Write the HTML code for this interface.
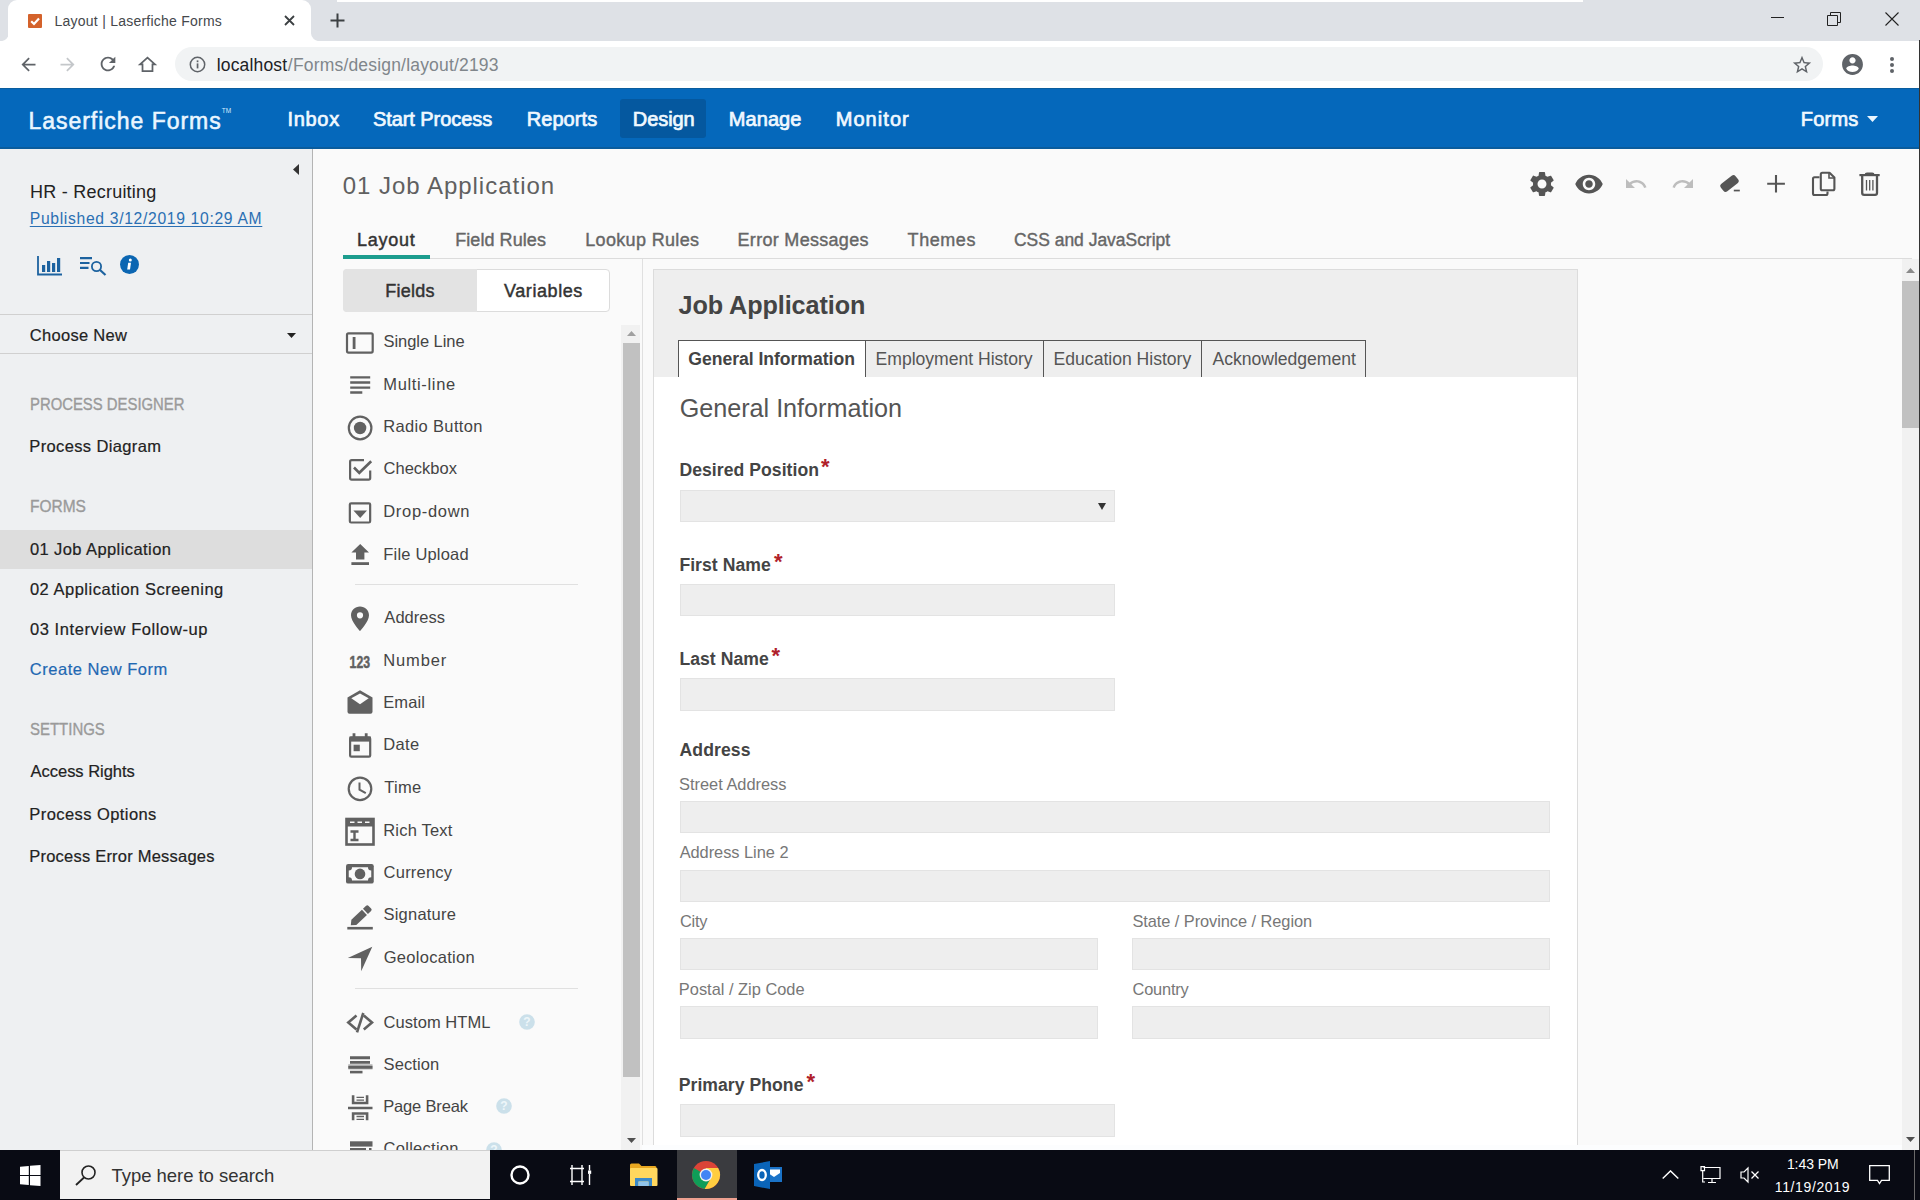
<!DOCTYPE html>
<html lang="en"><head><meta charset="utf-8"><title>Layout | Laserfiche Forms</title>
<style>
html,body{margin:0;padding:0;}
body{width:1920px;height:1200px;position:relative;overflow:hidden;background:#fafafa;font-family:"Liberation Sans",sans-serif;}
.b{position:absolute;display:block;box-sizing:border-box;}
.t{position:absolute;white-space:nowrap;line-height:1;display:block;}
</style></head><body>
<div class="b" style="left:0px;top:0px;width:1920px;height:41px;background:#dee1e6;"></div>
<div class="b" style="left:337px;top:0px;width:1246px;height:2px;background:#ffffff;"></div>
<div class="b" style="left:8px;top:0px;width:303px;height:41px;background:#ffffff;border-radius:9px 9px 0 0;"></div>
<div class="b" style="left:1771px;top:17px;width:13px;height:1px;background:#222;"></div>
<div class="b" style="left:0px;top:41px;width:1920px;height:47px;background:#ffffff;"></div>
<div class="b" style="left:175px;top:47px;width:1648px;height:34px;background:#f1f3f4;border-radius:17px;"></div>
<div class="b" style="left:1890px;top:57px;width:4px;height:4px;background:#5f6368;border-radius:2px;"></div>
<div class="b" style="left:1890px;top:63px;width:4px;height:4px;background:#5f6368;border-radius:2px;"></div>
<div class="b" style="left:1890px;top:69px;width:4px;height:4px;background:#5f6368;border-radius:2px;"></div>
<div class="b" style="left:0px;top:88px;width:1920px;height:61px;background:#0568bb;"></div>
<div class="b" style="left:0px;top:88px;width:1920px;height:1px;background:#0a5d9e;"></div>
<div class="b" style="left:0px;top:147px;width:1920px;height:2px;background:#0a5c9d;"></div>
<div class="b" style="left:620px;top:99px;width:86px;height:39px;background:#05589f;border-radius:3px;"></div>
<div class="b" style="left:0px;top:149px;width:312px;height:1001px;background:#eef0f2;"></div>
<div class="b" style="left:312px;top:149px;width:1px;height:1001px;background:#b4b4b4;"></div>
<div class="b" style="left:0px;top:314px;width:312px;height:1px;background:#d0d0d0;"></div>
<div class="b" style="left:0px;top:353px;width:312px;height:1px;background:#d0d0d0;"></div>
<div class="b" style="left:0px;top:530px;width:312px;height:39px;background:#dddddd;"></div>
<div class="b" style="left:343px;top:258px;width:1569px;height:1px;background:#dcdcdc;"></div>
<div class="b" style="left:343px;top:255px;width:87px;height:4px;background:#1c9d8e;"></div>
<div class="b" style="left:1902px;top:259px;width:17px;height:891px;background:#f1f1f1;"></div>
<div class="b" style="left:1902px;top:281px;width:17px;height:147px;background:#c1c1c1;"></div>
<div class="b" style="left:1919px;top:40px;width:1px;height:1110px;background:#333;"></div>
<div class="b" style="left:343px;top:269px;width:267px;height:43px;background:#ffffff;border:1px solid #dcdcdc;border-radius:4px;"></div>
<div class="b" style="left:343px;top:269px;width:134px;height:43px;background:#e3e3e3;border-radius:4px 0 0 4px;"></div>
<div class="b" style="left:621px;top:325px;width:19px;height:825px;background:#f1f1f1;"></div>
<div class="b" style="left:623px;top:343px;width:17px;height:734px;background:#c1c1c1;"></div>
<div class="b" style="left:642px;top:259px;width:1px;height:891px;background:#e0e0e0;"></div>
<div class="b" style="left:355px;top:584px;width:223px;height:1px;background:#e0e0e0;"></div>
<div class="b" style="left:355px;top:988px;width:223px;height:1px;background:#e0e0e0;"></div>
<div class="b" style="left:653px;top:269px;width:925px;height:881px;background:#ffffff;border:1px solid #dcdcdc;border-bottom:none;"></div>
<div class="b" style="left:654px;top:270px;width:923px;height:107px;background:#eeeeee;"></div>
<div class="b" style="left:678px;top:340px;width:688px;height:37px;border:1px solid #555;border-bottom:none;"></div>
<div class="b" style="left:678px;top:340px;width:188px;height:37px;background:#ffffff;border:1px solid #555;border-bottom:none;"></div>
<div class="b" style="left:1043px;top:340px;width:1px;height:37px;background:#555;"></div>
<div class="b" style="left:1201px;top:340px;width:1px;height:37px;background:#555;"></div>
<div class="b" style="left:680px;top:490px;width:435px;height:32px;background:#eeeeee;border:1px solid #e3e3e3;"></div>
<div class="b" style="left:680px;top:584px;width:435px;height:32px;background:#eeeeee;border:1px solid #e3e3e3;"></div>
<div class="b" style="left:680px;top:678px;width:435px;height:33px;background:#eeeeee;border:1px solid #e3e3e3;"></div>
<div class="b" style="left:680px;top:801px;width:870px;height:32px;background:#eeeeee;border:1px solid #e3e3e3;"></div>
<div class="b" style="left:680px;top:870px;width:870px;height:32px;background:#eeeeee;border:1px solid #e3e3e3;"></div>
<div class="b" style="left:680px;top:938px;width:418px;height:32px;background:#eeeeee;border:1px solid #e3e3e3;"></div>
<div class="b" style="left:1132px;top:938px;width:418px;height:32px;background:#eeeeee;border:1px solid #e3e3e3;"></div>
<div class="b" style="left:680px;top:1006px;width:418px;height:33px;background:#eeeeee;border:1px solid #e3e3e3;"></div>
<div class="b" style="left:1132px;top:1006px;width:418px;height:33px;background:#eeeeee;border:1px solid #e3e3e3;"></div>
<div class="b" style="left:680px;top:1104px;width:435px;height:33px;background:#eeeeee;border:1px solid #e3e3e3;"></div>
<div class="b" style="left:642px;top:1145px;width:1260px;height:5px;background:#fcfdfe;"></div>
<div class="b" style="left:0px;top:1150px;width:1920px;height:50px;background:#090b14;z-index:5;"></div>
<div class="b" style="left:60px;top:1150px;width:430px;height:49px;background:#f2f2f2;border-top:1px solid #cfcfcf;z-index:5;"></div>
<div class="b" style="left:677px;top:1150px;width:60px;height:50px;background:#3a3b3f;z-index:5;"></div>
<div class="b" style="left:677px;top:1198px;width:60px;height:2px;background:#eda090;z-index:5;"></div>
<div class="b" style="left:1914px;top:1150px;width:1px;height:50px;background:#6a6a6a;z-index:5;"></div>
<svg class="b" style="left:0px;top:33px;" width="9" height="8" viewBox="0 0 9 8"><path d="M0 8 H9 V0 A8 8 0 0 1 0 8 Z" fill="#fff"/></svg>
<svg class="b" style="left:311px;top:33px;" width="9" height="8" viewBox="0 0 9 8"><path d="M9 8 H0 V0 A8 8 0 0 0 9 8 Z" fill="#fff"/></svg>
<svg class="b" style="left:28px;top:14px;" width="14" height="14" viewBox="0 0 14 14"><rect x="0" y="0" width="14" height="14" rx="1" fill="#d4622b"/><path d="M3.2 7.2 L6 10 L11 4.6" stroke="#fff" stroke-width="2.2" fill="none"/></svg>
<svg class="b" style="left:284px;top:15px;" width="11" height="11" viewBox="0 0 11 11"><path d="M1 1 L10 10 M10 1 L1 10" stroke="#3c4043" stroke-width="1.8" fill="none"/></svg>
<svg class="b" style="left:330px;top:13px;" width="15" height="15" viewBox="0 0 15 15"><path d="M7.5 0.5 V14.5 M0.5 7.5 H14.5" stroke="#3c4043" stroke-width="2" fill="none"/></svg>
<svg class="b" style="left:1827px;top:12px;" width="14" height="14" viewBox="0 0 14 14"><path d="M0.5 3.5 H10.5 V13.5 H0.5 Z M3.5 3.5 V0.5 H13.5 V10.5 H10.5" stroke="#222" stroke-width="1" fill="none"/></svg>
<svg class="b" style="left:1885px;top:12px;" width="14" height="14" viewBox="0 0 14 14"><path d="M0.5 0.5 L13.5 13.5 M13.5 0.5 L0.5 13.5" stroke="#222" stroke-width="1.1" fill="none"/></svg>
<svg class="b" style="left:18px;top:54px;" width="21" height="21" viewBox="0 0 24 24"><path d="M20 11H7.83l5.59-5.59L12 4l-8 8 8 8 1.41-1.41L7.83 13H20v-2z" fill="#5f6368"/></svg>
<svg class="b" style="left:57px;top:54px;" width="21" height="21" viewBox="0 0 24 24"><path d="M12 4l-1.41 1.41L16.17 11H4v2h12.17l-5.58 5.59L12 20l8-8z" fill="#c4c7ca"/></svg>
<svg class="b" style="left:97px;top:53px;" width="22" height="22" viewBox="0 0 24 24"><path d="M17.65 6.35C16.2 4.9 14.21 4 12 4c-4.42 0-7.99 3.58-7.99 8s3.57 8 7.99 8c3.73 0 6.84-2.55 7.73-6h-2.08c-.82 2.33-3.04 4-5.65 4-3.31 0-6-2.69-6-6s2.69-6 6-6c1.66 0 3.14.69 4.22 1.78L13 11h7V4l-2.35 2.35z" fill="#5f6368"/></svg>
<svg class="b" style="left:137px;top:54px;" width="21" height="21" viewBox="0 0 24 24"><path d="M12 4.2 L3.5 11.8 H6.3 V19.5 H17.7 V11.8 H20.500 Z" stroke="#5f6368" stroke-width="2" fill="none" stroke-linejoin="miter"/></svg>
<svg class="b" style="left:189px;top:56px;" width="17" height="17" viewBox="0 0 17 17"><circle cx="8.5" cy="8.5" r="7.2" stroke="#5f6368" stroke-width="1.5" fill="none"/><rect x="7.7" y="7.4" width="1.7" height="5" fill="#5f6368"/><rect x="7.7" y="4.4" width="1.7" height="1.8" fill="#5f6368"/></svg>
<svg class="b" style="left:1791px;top:54px;" width="22" height="22" viewBox="0 0 24 24"><path d="M22 9.24l-7.19-.62L12 2 9.19 8.63 2 9.24l5.46 4.73L5.82 21 12 17.27 18.18 21l-1.63-7.03L22 9.24zM12 15.4l-3.76 2.27 1-4.28-3.32-2.88 4.38-.38L12 6.1l1.71 4.04 4.38.38-3.32 2.88 1 4.28L12 15.4z" fill="#5f6368"/></svg>
<svg class="b" style="left:1840px;top:52px;" width="25" height="25" viewBox="0 0 24 24"><path d="M12 2C6.48 2 2 6.48 2 12s4.48 10 10 10 10-4.48 10-10S17.52 2 12 2zm0 3c1.66 0 3 1.34 3 3s-1.34 3-3 3-3-1.34-3-3 1.34-3 3-3zm0 14.2c-2.5 0-4.71-1.28-6-3.22.03-1.99 4-3.08 6-3.08 1.99 0 5.970 1.090 6 3.080-1.290 1.940-3.500 3.220-6 3.220z" fill="#5f6368"/></svg>
<svg class="b" style="left:1867px;top:116px;" width="11" height="6" viewBox="0 0 11 6"><path d="M0 0 H11 L5.5 6 Z" fill="#eaf6ff"/></svg>
<svg class="b" style="left:293px;top:164px;" width="6" height="11" viewBox="0 0 6 11"><path d="M6 0 V11 L0 5.5 Z" fill="#333"/></svg>
<svg class="b" style="left:37px;top:256px;" width="26" height="20" viewBox="0 0 26 20"><path d="M1 0 V18.5 H25" stroke="#1c629f" stroke-width="1.8" fill="none"/><rect x="5" y="9" width="3.2" height="7" fill="#1c629f"/><rect x="10" y="5" width="3.2" height="11" fill="#1c629f"/><rect x="15" y="7" width="3.2" height="9" fill="#1c629f"/><rect x="20" y="2" width="3.2" height="14" fill="#1c629f"/></svg>
<svg class="b" style="left:80px;top:257px;" width="27" height="19" viewBox="0 0 27 19"><path d="M0 1.200 H12 M0 6 H9.500 M0 10.800 H8.500" stroke="#1c629f" stroke-width="2.200" fill="none"/><circle cx="16.500" cy="9.500" r="4.600" stroke="#1c629f" stroke-width="1.800" fill="none"/><path d="M20 13 L25.500 18" stroke="#1c629f" stroke-width="2.200"/></svg>
<svg class="b" style="left:120px;top:255px;" width="19" height="19" viewBox="0 0 19 19"><circle cx="9.500" cy="9.500" r="9.500" fill="#0b66b2"/><path d="M8.200 7.800 H11 L10 14.600 H7.200 Z" fill="#fff"/><circle cx="10.300" cy="4.900" r="1.500" fill="#fff"/></svg>
<svg class="b" style="left:287px;top:333px;" width="9" height="5" viewBox="0 0 9 5"><path d="M0 0 H9 L4.500 5 Z" fill="#222"/></svg>
<svg class="b" style="left:1527px;top:169px;" width="30" height="30" viewBox="0 0 24 24"><path d="M19.14 12.94c.04-.3.06-.61.06-.94 0-.32-.02-.64-.07-.94l2.03-1.58c.18-.14.23-.41.12-.61l-1.920-3.320c-.12-.22-.37-.29-.59-.22l-2.390.96c-.5-.38-1.030-.7-1.620-.94l-.36-2.540c-.04-.24-.24-.41-.48-.41h-3.840c-.24 0-.43.17-.47.41l-.36 2.540c-.59.24-1.130.57-1.620.94l-2.390-.96c-.22-.08-.47 0-.59.22L2.740 8.870c-.12.21-.08.47.12.61l2.030 1.580c-.05.3-.09.63-.09.94s.02.64.07.94l-2.030 1.580c-.18.14-.23.41-.12.61l1.920 3.320c.12.22.37.29.59.22l2.390-.96c.5.38 1.030.7 1.620.94l.36 2.540c.05.24.24.41.48.41h3.840c.24 0 .44-.17.47-.41l.36-2.540c.59-.24 1.130-.56 1.620-.94l2.390.96c.22.08.47 0 .59-.22l1.920-3.320c.12-.22.07-.47-.12-.61l-2.010-1.580zM12 15.600c-1.980 0-3.600-1.620-3.600-3.600s1.620-3.600 3.600-3.600 3.600 1.620 3.600 3.600-1.620 3.600-3.600 3.600z" fill="#555"/></svg>
<svg class="b" style="left:1574px;top:169px;" width="30" height="30" viewBox="0 0 24 24"><path d="M12 4.500C7 4.500 2.730 7.610 1 12c1.730 4.390 6 7.500 11 7.500s9.270-3.110 11-7.500c-1.730-4.390-6-7.500-11-7.500zM12 17c-2.760 0-5-2.240-5-5s2.240-5 5-5 5 2.240 5 5-2.240 5-5 5zm0-8c-1.660 0-3 1.340-3 3s1.340 3 3 3 3-1.340 3-3-1.340-3-3-3z" fill="#555"/></svg>
<svg class="b" style="left:1624px;top:172px;" width="24" height="24" viewBox="0 0 24 24"><path d="M12.500 8c-2.650 0-5.050.99-6.900 2.600L2 7v9h9l-3.620-3.620c1.390-1.160 3.160-1.880 5.120-1.880 3.540 0 6.550 2.310 7.600 5.500l2.370-.78C21.080 11.030 17.150 8 12.500 8z" fill="#bdbdbd"/></svg>
<svg class="b" style="left:1671px;top:172px;" width="24" height="24" viewBox="0 0 24 24"><path d="M18.400 10.600C16.550 8.990 14.150 8 11.500 8c-4.650 0-8.580 3.030-9.960 7.220L3.900 16c1.050-3.190 4.050-5.500 7.600-5.500 1.950 0 3.730.72 5.120 1.880L13 16h9V7l-3.600 3.600z" fill="#bdbdbd"/></svg>
<svg class="b" style="left:1716px;top:172px" width="28" height="24" viewBox="1716 172 28 24"><rect x="1720.200" y="178.700" width="18.600" height="9.600" rx="2.800" transform="rotate(-38 1729.500 183.500)" fill="#555"/><rect x="1733.800" y="189.700" width="6" height="1.700" fill="#555"/></svg>
<svg class="b" style="left:1765px;top:173px" width="22" height="22" viewBox="1765 173 22 22"><path d="M1776 175.100 V192.500 M1767.200 183.800 H1784.900" stroke="#555" stroke-width="2.100" fill="none"/></svg>
<svg class="b" style="left:1809px;top:169px" width="30" height="30" viewBox="1809 169 30 30"><path d="M1819.500 177.200 H1814.500 Q1813 177.200 1813 178.700 V193.500 Q1813 195 1814.500 195 H1826 Q1827.500 195 1827.500 193.500 V191.500" stroke="#555" stroke-width="2.100" fill="none"/><path d="M1829.500 172.700 H1822.300 Q1820.800 172.700 1820.800 174.200 V188.800 Q1820.800 190.300 1822.300 190.300 H1832.900 Q1834.400 190.300 1834.400 188.800 V177.600 Z" stroke="#555" stroke-width="2.100" fill="none" stroke-linejoin="round"/><path d="M1829 172.700 V178 H1834.400" stroke="#555" stroke-width="1.600" fill="none"/></svg>
<svg class="b" style="left:1857px;top:170px" width="26" height="29" viewBox="1857 170 26 29"><path d="M1859.400 175.100 H1879.700" stroke="#555" stroke-width="2.200"/><path d="M1865.500 174.500 Q1865.500 173.200 1867 173.200 H1872.200 Q1873.700 173.200 1873.700 174.500" stroke="#555" stroke-width="1.600" fill="none"/><path d="M1862.200 176 V193 Q1862.200 194.900 1864.100 194.900 H1875.100 Q1877 194.900 1877 193 V176" stroke="#555" stroke-width="2.300" fill="none"/><path d="M1866.500 180 V190.500 M1869.700 180 V190.500 M1872.900 180 V190.500" stroke="#555" stroke-width="1.300" fill="none"/></svg>
<svg class="b" style="left:1906px;top:268px;" width="9" height="5" viewBox="0 0 9 5"><path d="M0 5 H9 L4.500 0 Z" fill="#8a8a8a"/></svg>
<svg class="b" style="left:1906px;top:1137px;" width="9" height="5" viewBox="0 0 9 5"><path d="M0 0 H9 L4.500 5 Z" fill="#505050"/></svg>
<svg class="b" style="left:627px;top:331px;" width="9" height="5" viewBox="0 0 9 5"><path d="M0 5 H9 L4.500 0 Z" fill="#a0a0a0"/></svg>
<svg class="b" style="left:627px;top:1138px;" width="9" height="5" viewBox="0 0 9 5"><path d="M0 0 H9 L4.500 5 Z" fill="#505050"/></svg>
<svg class="b" style="left:344px;top:330px" width="32" height="26" viewBox="344 330 32 26"><rect x="347" y="333.300" width="25.700" height="19.300" rx="1.500" stroke="#616161" stroke-width="2.200" fill="none"/><rect x="352.700" y="337" width="2.800" height="12" fill="#616161"/></svg>
<svg class="b" style="left:348px;top:374px" width="25" height="22" viewBox="348 374 25 22"><path d="M350.200 377.400 H370.200 M350.200 382.500 H370.200 M350.200 387.600 H370.200 M350.200 392.500 H362.300" stroke="#616161" stroke-width="2.300" fill="none"/></svg>
<svg class="b" style="left:345px;top:413px" width="30" height="30" viewBox="345 413 30 30"><circle cx="360.100" cy="428" r="11.300" stroke="#616161" stroke-width="2.200" fill="none"/><circle cx="360.100" cy="428" r="6.200" fill="#616161"/></svg>
<svg class="b" style="left:346px;top:456px" width="29" height="28" viewBox="346 456 29 28"><path d="M370.200 470.500 V478 Q370.200 479.600 368.600 479.600 H351.700 Q350.100 479.600 350.100 478 V461.700 Q350.100 460.100 351.700 460.100 H364" stroke="#616161" stroke-width="2.200" fill="none"/><path d="M354 467.500 L359.300 472.800 L371.200 461.200" stroke="#616161" stroke-width="2.600" fill="none"/></svg>
<svg class="b" style="left:346px;top:500px" width="28" height="26" viewBox="346 500 28 26"><rect x="349.850" y="503.300" width="20.300" height="19.200" rx="1.300" stroke="#616161" stroke-width="2.200" fill="none"/><path d="M353.400 510.600 H367 L360.200 518.100 Z" fill="#616161"/></svg>
<svg class="b" style="left:349px;top:542px" width="23" height="26" viewBox="349 542 23 26"><path d="M360.200 543.900 L369 552.500 H364.400 V559.500 H356 V552.500 H351.400 Z" fill="#616161"/><rect x="351.400" y="562.200" width="17.600" height="2.800" fill="#616161"/></svg>
<svg class="b" style="left:349px;top:604px" width="23" height="30" viewBox="349 604 23 30"><path d="M360 606.400 C355 606.400 351 610.300 351 615.200 C351 621.500 360 631 360 631 C360 631 369 621.500 369 615.200 C369 610.300 365 606.400 360 606.400 Z M360 618.400 A3.100 3.100 0 1 1 360 612.200 A3.100 3.100 0 0 1 360 618.400 Z" fill="#616161" fill-rule="evenodd"/></svg>
<svg class="b" style="left:348px;top:653px" width="26" height="18" viewBox="348 653 26 18"><text transform="translate(349.600,668) scale(0.940,1.260)" font-family="Liberation Sans, sans-serif" font-weight="700" font-size="13" fill="#616161" stroke="#616161" stroke-width="0.400">123</text></svg>
<svg class="b" style="left:345px;top:688px" width="30" height="28" viewBox="345 688 30 28"><path d="M360 690.300 L372.500 697.600 V711.800 Q372.500 713.750 370.500 713.750 H349.500 Q347.500 713.750 347.500 711.800 V697.600 Z" fill="#616161"/><path d="M351.300 698.300 L360 693.400 L368.700 698.300 L360 704.300 Z" fill="#fafafa"/></svg>
<svg class="b" style="left:346px;top:731px" width="28" height="29" viewBox="346 731 28 29"><path d="M354 733.300 V737.500 M366.200 733.300 V737.500" stroke="#616161" stroke-width="2.800"/><rect x="350.100" y="737.500" width="20.100" height="19.200" rx="1.200" stroke="#616161" stroke-width="2.200" fill="none"/><rect x="349.500" y="736.400" width="21.300" height="5.200" fill="#616161"/><rect x="353.600" y="744.700" width="6.200" height="6.500" fill="#616161"/></svg>
<svg class="b" style="left:345px;top:774px" width="30" height="30" viewBox="345 774 30 30"><circle cx="360" cy="788.850" r="11.300" stroke="#616161" stroke-width="2.200" fill="none"/><path d="M359.500 782.500 V789.600 L365.800 793.200" stroke="#616161" stroke-width="2" fill="none"/></svg>
<svg class="b" style="left:343px;top:815px" width="34" height="33" viewBox="343 815 34 33"><rect x="346.500" y="819" width="27" height="25.500" stroke="#616161" stroke-width="2.600" fill="none"/><rect x="346.500" y="819" width="27" height="7.500" fill="#616161"/><path d="M350 822.300 H354.500 M357.500 822.300 H362 M365 822.300 H369.500" stroke="#fafafa" stroke-width="1.500"/><path d="M350.500 831.500 H358.500 M350.500 840 H358.500 M354.500 831.500 V840" stroke="#616161" stroke-width="2.400" fill="none"/></svg>
<svg class="b" style="left:344px;top:862px" width="32" height="24" viewBox="344 862 32 24"><rect x="346" y="864" width="27.750" height="19.600" rx="2.200" fill="#616161"/><path d="M348.750 870.500 Q352 870.500 352 867.200 H368 Q368 870.500 371.250 870.500 V877.200 Q368 877.200 368 880.500 H352 Q352 877.200 348.750 877.200 Z" fill="#fafafa"/><circle cx="360" cy="873.900" r="5.300" fill="#616161"/></svg>
<svg class="b" style="left:345px;top:903px" width="31" height="29" viewBox="345 903 31 29"><g transform="translate(350.800,925.300) rotate(-43.500)" fill="#616161"><path d="M0 0 L4.200 -3.600 H18.800 V3.600 H4.200 Z"/><path d="M20.200 -3.600 H24.500 Q26.300 -3.600 26.300 -1.800 V1.800 Q26.300 3.600 24.500 3.600 H20.200 Z"/></g><rect x="347.300" y="926.900" width="25.500" height="2.600" fill="#616161"/></svg>
<svg class="b" style="left:345px;top:944px" width="31" height="30" viewBox="345 944 31 30"><path d="M372.300 946.800 L347.800 958 L361 958.300 L361.200 971.300 Z" fill="#616161"/></svg>
<svg class="b" style="left:344px;top:1010px" width="33" height="25" viewBox="344 1010 33 25"><path d="M356.500 1015.500 L348.300 1022.500 L356.500 1029.500 M363.800 1015.500 L372 1022.500 L363.800 1029.500" stroke="#616161" stroke-width="2.600" fill="none"/><path d="M363.300 1013 L357 1032.300" stroke="#616161" stroke-width="2.600"/></svg>
<svg class="b" style="left:346px;top:1054px" width="29" height="22" viewBox="346 1054 29 22"><path d="M350 1057.700 H370 M350 1062.400 H370 M348.300 1067.200 H372.500" stroke="#616161" stroke-width="2.900" fill="none"/><path d="M350 1072.100 H362.500" stroke="#616161" stroke-width="2.600"/><rect x="348.300" y="1064" width="24.200" height="5.600" fill="#616161" opacity="0.350"/></svg>
<svg class="b" style="left:346px;top:1093px" width="29" height="30" viewBox="346 1093 29 30"><path d="M353.100 1095.300 V1103 H367.100 V1095.300" stroke="#616161" stroke-width="2.600" fill="none"/><path d="M356.500 1097.300 H364 M356.500 1100.200 H364" stroke="#616161" stroke-width="1.300"/><path d="M348 1108 H372.500" stroke="#616161" stroke-width="2.500"/><path d="M353.100 1120.300 V1113.500 H367.100 V1120.300" stroke="#616161" stroke-width="2.600" fill="none"/><path d="M356.500 1116.500 H364 M356.500 1119.300 H364" stroke="#616161" stroke-width="1.300"/></svg>
<svg class="b" style="left:348px;top:1140px" width="27" height="10" viewBox="348 1140 27 10"><rect x="350" y="1141.300" width="22.500" height="5.300" fill="#616161"/><rect x="350" y="1148" width="16" height="2" fill="#616161"/><rect x="369" y="1148" width="2.500" height="2" fill="#616161"/></svg>
<svg class="b" style="left:518.1px;top:1012.7px" width="18" height="18" viewBox="518.1 1012.7 18 18"><circle cx="527.1" cy="1021.7" r="7.800" fill="#cbe0ea"/><text x="527.1" y="1026" text-anchor="middle" font-family="Liberation Sans, sans-serif" font-weight="700" font-size="12" fill="#eef6f9">?</text></svg>
<svg class="b" style="left:495.2px;top:1097.2px" width="18" height="18" viewBox="495.2 1097.2 18 18"><circle cx="504.2" cy="1106.2" r="7.800" fill="#cbe0ea"/><text x="504.2" y="1110.5" text-anchor="middle" font-family="Liberation Sans, sans-serif" font-weight="700" font-size="12" fill="#eef6f9">?</text></svg>
<svg class="b" style="left:485.2px;top:1140.5px" width="18" height="9.5" viewBox="485.2 1140.5 18 9.5"><circle cx="494.2" cy="1149.5" r="7.800" fill="#cbe0ea"/><text x="494.2" y="1153.8" text-anchor="middle" font-family="Liberation Sans, sans-serif" font-weight="700" font-size="12" fill="#eef6f9">?</text></svg>
<svg class="b" style="left:1098px;top:503px;" width="8" height="7" viewBox="0 0 8 7"><path d="M0 0 H8 L4 7 Z" fill="#333"/></svg>
<svg class="b" style="left:20px;top:1165px;z-index:6;" width="21" height="21" viewBox="0 0 21 21"><path d="M0 1.800 L8.800 0.900 V9.900 H0 Z M10 0.800 L20.500 0 V9.900 H10 Z M0 11.100 H8.800 V20.100 L0 19.200 Z M10 11.100 H20.500 V21 L10 20.200 Z" fill="#fff"/></svg>
<svg class="b" style="left:75px;top:1164px;z-index:6;" width="22" height="22" viewBox="0 0 22 22"><circle cx="13.500" cy="8.500" r="6.500" stroke="#222" stroke-width="1.600" fill="none"/><path d="M9 13.500 L1 21" stroke="#222" stroke-width="1.800"/></svg>
<svg class="b" style="left:509px;top:1164px;z-index:6;" width="22" height="22" viewBox="0 0 22 22"><circle cx="11" cy="11" r="8.500" stroke="#fff" stroke-width="2.400" fill="none"/></svg>
<svg class="b" style="left:569px;top:1165px;z-index:6;" width="24" height="20" viewBox="0 0 24 20"><path d="M1 3.500 H15 M1 16.500 H15 M3 0 V20 M13 0 V20" stroke="#fff" stroke-width="1.400" fill="none"/><path d="M20.500 0 V5.500 M20.500 9 V20" stroke="#fff" stroke-width="1.400"/><rect x="19" y="5.500" width="3.200" height="3.400" fill="#fff"/></svg>
<svg class="b" style="left:629px;top:1162px;z-index:6;" width="30" height="26" viewBox="0 0 30 26"><path d="M1 3 Q1 1.500 2.500 1.500 H10 L12.500 4 H26 Q27.500 4 27.500 5.500 V7 H1 Z" fill="#e8a720"/><rect x="1" y="6" width="27.500" height="18" rx="1" fill="#ffd75e"/><path d="M6 24 V16 H23 V24 H19.500 V19.500 H9.500 V24 Z" fill="#3b89c9"/><rect x="9.500" y="19.500" width="10" height="4.500" fill="#8fc3ea"/></svg>
<svg class="b" style="left:691px;top:1160px;z-index:6;" width="30" height="30" viewBox="0 0 30 30"><circle cx="15" cy="15" r="14" fill="#db4437"/><path d="M15 15 L2.900 8 A14 14 0 0 0 13.700 28.950 L20 18 Z" fill="#0f9d58"/><path d="M15 15 L20 18 L13.700 28.950 A14 14 0 0 0 27.100 8 H15 Z" fill="#ffcd40"/><circle cx="15" cy="15" r="6.400" fill="#f1f1f1"/><circle cx="15" cy="15" r="5" fill="#4285f4"/></svg>
<svg class="b" style="left:754px;top:1161px;z-index:6;" width="28" height="28" viewBox="0 0 28 28"><rect x="11" y="6" width="17" height="15" fill="#1a73c8"/><path d="M14 8.500 H26 V12 L20 16 L14 12 Z" fill="#ffffff"/><path d="M0 3 L16 0 V28 L0 25 Z" fill="#0a64b8"/><ellipse cx="8" cy="14" rx="3.800" ry="5" stroke="#fff" stroke-width="2.300" fill="none"/></svg>
<svg class="b" style="left:1662px;top:1170px;z-index:6;" width="17" height="9" viewBox="0 0 17 9"><path d="M0.700 8.500 L8.500 0.900 L16.300 8.500" stroke="#fff" stroke-width="1.400" fill="none"/></svg>
<svg class="b" style="left:1700px;top:1166px;z-index:6;" width="21" height="18" viewBox="0 0 21 18"><path d="M3.500 1.500 H20 V12.500 H3.500 M1 0.700 H4.500 V4.700 H1 Z M2.700 4.700 V16 H5 M8 16.500 H16 M12 12.500 V16.500" stroke="#fff" stroke-width="1.200" fill="none"/></svg>
<svg class="b" style="left:1740px;top:1166px;z-index:6;" width="20" height="18" viewBox="0 0 20 18"><path d="M1 6 H4 L8 2 V16 L4 12 H1 Z" stroke="#fff" stroke-width="1.200" fill="none"/><path d="M11.500 5.500 L18.500 12.500 M18.500 5.500 L11.500 12.500" stroke="#fff" stroke-width="1.300"/></svg>
<svg class="b" style="left:1869px;top:1165px;z-index:6;" width="21" height="20" viewBox="0 0 21 20"><path d="M0.700 0.700 H20.300 V15.300 H12.500 L10.500 18.500 L8.500 15.300 H0.700 Z" stroke="#fff" stroke-width="1.300" fill="none"/></svg>
<span class="t" style="left:54.54px;top:14.15px;font-family:'Liberation Sans', sans-serif;font-size:14px;font-weight:400;color:#45484c;letter-spacing:0.239px;">Layout | Laserfiche Forms</span>
<span class="t" style="left:216.78px;top:57.19px;font-family:'Liberation Sans', sans-serif;font-size:17.5px;font-weight:400;color:#202124;letter-spacing:0.153px;">localhost</span>
<span class="t" style="left:287.86px;top:57.19px;font-family:'Liberation Sans', sans-serif;font-size:17.5px;font-weight:400;color:#80868b;letter-spacing:0.184px;">/Forms/design/layout/2193</span>
<span class="t" style="left:28.51px;top:109.53px;font-family:'Liberation Sans', sans-serif;font-size:23px;font-weight:400;color:#eaf6ff;letter-spacing:0.967px;-webkit-text-stroke:0.55px #eaf6ff;">Laserfiche Forms</span>
<span class="t" style="left:221.72px;top:107.50px;font-family:'Liberation Sans', sans-serif;font-size:6.5px;font-weight:400;color:#d6ecff;letter-spacing:0.153px;">TM</span>
<span class="t" style="left:287.49px;top:108.57px;font-family:'Liberation Sans', sans-serif;font-size:20px;font-weight:400;color:#f0f8ff;letter-spacing:0.681px;-webkit-text-stroke:0.7px #f0f8ff;">Inbox</span>
<span class="t" style="left:372.95px;top:108.57px;font-family:'Liberation Sans', sans-serif;font-size:20px;font-weight:400;color:#f0f8ff;letter-spacing:-0.064px;-webkit-text-stroke:0.7px #f0f8ff;">Start Process</span>
<span class="t" style="left:526.75px;top:108.57px;font-family:'Liberation Sans', sans-serif;font-size:20px;font-weight:400;color:#f0f8ff;letter-spacing:0.059px;-webkit-text-stroke:0.7px #f0f8ff;">Reports</span>
<span class="t" style="left:632.75px;top:108.57px;font-family:'Liberation Sans', sans-serif;font-size:20px;font-weight:400;color:#f0f8ff;letter-spacing:-0.058px;-webkit-text-stroke:0.7px #f0f8ff;">Design</span>
<span class="t" style="left:728.75px;top:108.57px;font-family:'Liberation Sans', sans-serif;font-size:20px;font-weight:400;color:#f0f8ff;letter-spacing:0.074px;-webkit-text-stroke:0.7px #f0f8ff;">Manage</span>
<span class="t" style="left:835.75px;top:108.57px;font-family:'Liberation Sans', sans-serif;font-size:20px;font-weight:400;color:#f0f8ff;letter-spacing:1.045px;-webkit-text-stroke:0.7px #f0f8ff;">Monitor</span>
<span class="t" style="left:1800.75px;top:108.57px;font-family:'Liberation Sans', sans-serif;font-size:20px;font-weight:400;color:#f0f8ff;letter-spacing:0.218px;-webkit-text-stroke:0.7px #f0f8ff;">Forms</span>
<span class="t" style="left:30.03px;top:182.76px;font-family:'Liberation Sans', sans-serif;font-size:18px;font-weight:400;color:#222;letter-spacing:0.236px;">HR - Recruiting</span>
<span class="t" style="left:29.77px;top:210.71px;font-family:'Liberation Sans', sans-serif;font-size:15.7px;font-weight:400;color:#2a6fb3;letter-spacing:0.672px;text-decoration:underline;text-underline-offset:2px;text-decoration-thickness:1px;">Published 3/12/2019 10:29 AM</span>
<span class="t" style="left:29.83px;top:327.03px;font-family:'Liberation Sans', sans-serif;font-size:16.5px;font-weight:400;color:#222;letter-spacing:0.291px;-webkit-text-stroke:0.2px #222;">Choose New</span>
<span class="t" style="left:29.80px;top:397.46px;font-family:'Liberation Sans', sans-serif;font-size:16px;font-weight:400;color:#9a9a9a;letter-spacing:0.000px;-webkit-text-stroke:0.35px #9a9a9a;transform-origin:0 0;transform:scaleX(0.9292);">PROCESS DESIGNER</span>
<span class="t" style="left:29.31px;top:438.03px;font-family:'Liberation Sans', sans-serif;font-size:16.5px;font-weight:400;color:#222;letter-spacing:0.363px;-webkit-text-stroke:0.2px #222;">Process Diagram</span>
<span class="t" style="left:29.70px;top:499.46px;font-family:'Liberation Sans', sans-serif;font-size:16px;font-weight:400;color:#9a9a9a;letter-spacing:0.000px;-webkit-text-stroke:0.35px #9a9a9a;transform-origin:0 0;transform:scaleX(0.9684);">FORMS</span>
<span class="t" style="left:29.90px;top:541.03px;font-family:'Liberation Sans', sans-serif;font-size:16.5px;font-weight:400;color:#222;letter-spacing:0.416px;-webkit-text-stroke:0.2px #222;">01 Job Application</span>
<span class="t" style="left:29.90px;top:581.03px;font-family:'Liberation Sans', sans-serif;font-size:16.5px;font-weight:400;color:#222;letter-spacing:0.511px;-webkit-text-stroke:0.2px #222;">02 Application Screening</span>
<span class="t" style="left:29.90px;top:621.03px;font-family:'Liberation Sans', sans-serif;font-size:16.5px;font-weight:400;color:#222;letter-spacing:0.594px;-webkit-text-stroke:0.2px #222;">03 Interview Follow-up</span>
<span class="t" style="left:29.83px;top:661.03px;font-family:'Liberation Sans', sans-serif;font-size:16.5px;font-weight:400;color:#1f68b2;letter-spacing:0.517px;-webkit-text-stroke:0.2px #1f68b2;">Create New Form</span>
<span class="t" style="left:30.06px;top:722.46px;font-family:'Liberation Sans', sans-serif;font-size:16px;font-weight:400;color:#9a9a9a;letter-spacing:0.000px;-webkit-text-stroke:0.35px #9a9a9a;transform-origin:0 0;transform:scaleX(0.9350);">SETTINGS</span>
<span class="t" style="left:30.56px;top:763.03px;font-family:'Liberation Sans', sans-serif;font-size:16.5px;font-weight:400;color:#222;letter-spacing:-0.024px;-webkit-text-stroke:0.2px #222;">Access Rights</span>
<span class="t" style="left:29.31px;top:805.53px;font-family:'Liberation Sans', sans-serif;font-size:16.5px;font-weight:400;color:#222;letter-spacing:0.430px;-webkit-text-stroke:0.2px #222;">Process Options</span>
<span class="t" style="left:29.31px;top:848.03px;font-family:'Liberation Sans', sans-serif;font-size:16.5px;font-weight:400;color:#222;letter-spacing:0.213px;-webkit-text-stroke:0.2px #222;">Process Error Messages</span>
<span class="t" style="left:342.63px;top:174.18px;font-family:'Liberation Sans', sans-serif;font-size:24px;font-weight:400;color:#606060;letter-spacing:0.982px;">01 Job Application</span>
<span class="t" style="left:357.03px;top:230.76px;font-family:'Liberation Sans', sans-serif;font-size:18px;font-weight:400;color:#333;letter-spacing:0.751px;-webkit-text-stroke:0.45px #333;">Layout</span>
<span class="t" style="left:455.19px;top:230.76px;font-family:'Liberation Sans', sans-serif;font-size:18px;font-weight:400;color:#666;letter-spacing:0.069px;-webkit-text-stroke:0.4px #666;">Field Rules</span>
<span class="t" style="left:585.19px;top:230.76px;font-family:'Liberation Sans', sans-serif;font-size:18px;font-weight:400;color:#666;letter-spacing:0.341px;-webkit-text-stroke:0.4px #666;">Lookup Rules</span>
<span class="t" style="left:737.57px;top:230.76px;font-family:'Liberation Sans', sans-serif;font-size:18px;font-weight:400;color:#666;letter-spacing:0.298px;-webkit-text-stroke:0.4px #666;">Error Messages</span>
<span class="t" style="left:907.62px;top:230.76px;font-family:'Liberation Sans', sans-serif;font-size:18px;font-weight:400;color:#666;letter-spacing:0.559px;-webkit-text-stroke:0.4px #666;">Themes</span>
<span class="t" style="left:1014.03px;top:230.76px;font-family:'Liberation Sans', sans-serif;font-size:18px;font-weight:400;color:#666;letter-spacing:0.000px;-webkit-text-stroke:0.4px #666;transform-origin:0 0;transform:scaleX(0.9691);">CSS and JavaScript</span>
<span class="t" style="left:385.19px;top:281.76px;font-family:'Liberation Sans', sans-serif;font-size:18px;font-weight:400;color:#333;letter-spacing:0.257px;-webkit-text-stroke:0.45px #333;">Fields</span>
<span class="t" style="left:504.03px;top:281.76px;font-family:'Liberation Sans', sans-serif;font-size:18px;font-weight:400;color:#333;letter-spacing:0.579px;-webkit-text-stroke:0.45px #333;">Variables</span>
<span class="t" style="left:383.56px;top:333.03px;font-family:'Liberation Sans', sans-serif;font-size:16.5px;font-weight:400;color:#444;letter-spacing:-0.058px;">Single Line</span>
<span class="t" style="left:383.25px;top:375.53px;font-family:'Liberation Sans', sans-serif;font-size:16.5px;font-weight:400;color:#444;letter-spacing:0.654px;">Multi-line</span>
<span class="t" style="left:383.25px;top:418.03px;font-family:'Liberation Sans', sans-serif;font-size:16.5px;font-weight:400;color:#444;letter-spacing:0.344px;">Radio Button</span>
<span class="t" style="left:383.61px;top:459.53px;font-family:'Liberation Sans', sans-serif;font-size:16.5px;font-weight:400;color:#444;letter-spacing:-0.002px;">Checkbox</span>
<span class="t" style="left:383.25px;top:503.03px;font-family:'Liberation Sans', sans-serif;font-size:16.5px;font-weight:400;color:#444;letter-spacing:0.681px;">Drop-down</span>
<span class="t" style="left:383.25px;top:545.53px;font-family:'Liberation Sans', sans-serif;font-size:16.5px;font-weight:400;color:#444;letter-spacing:0.193px;">File Upload</span>
<span class="t" style="left:384.36px;top:609.03px;font-family:'Liberation Sans', sans-serif;font-size:16.5px;font-weight:400;color:#444;letter-spacing:0.038px;">Address</span>
<span class="t" style="left:383.25px;top:651.53px;font-family:'Liberation Sans', sans-serif;font-size:16.5px;font-weight:400;color:#444;letter-spacing:0.881px;">Number</span>
<span class="t" style="left:383.25px;top:694.03px;font-family:'Liberation Sans', sans-serif;font-size:16.5px;font-weight:400;color:#444;letter-spacing:0.115px;">Email</span>
<span class="t" style="left:383.25px;top:735.53px;font-family:'Liberation Sans', sans-serif;font-size:16.5px;font-weight:400;color:#444;letter-spacing:0.368px;">Date</span>
<span class="t" style="left:384.19px;top:779.03px;font-family:'Liberation Sans', sans-serif;font-size:16.5px;font-weight:400;color:#444;letter-spacing:0.314px;">Time</span>
<span class="t" style="left:383.25px;top:821.53px;font-family:'Liberation Sans', sans-serif;font-size:16.5px;font-weight:400;color:#444;letter-spacing:0.190px;">Rich Text</span>
<span class="t" style="left:383.61px;top:864.03px;font-family:'Liberation Sans', sans-serif;font-size:16.5px;font-weight:400;color:#444;letter-spacing:0.216px;">Currency</span>
<span class="t" style="left:383.56px;top:905.53px;font-family:'Liberation Sans', sans-serif;font-size:16.5px;font-weight:400;color:#444;letter-spacing:0.203px;">Signature</span>
<span class="t" style="left:383.67px;top:949.03px;font-family:'Liberation Sans', sans-serif;font-size:16.5px;font-weight:400;color:#444;letter-spacing:0.288px;">Geolocation</span>
<span class="t" style="left:383.61px;top:1013.53px;font-family:'Liberation Sans', sans-serif;font-size:16.5px;font-weight:400;color:#444;letter-spacing:0.041px;">Custom HTML</span>
<span class="t" style="left:383.56px;top:1055.53px;font-family:'Liberation Sans', sans-serif;font-size:16.5px;font-weight:400;color:#444;letter-spacing:0.109px;">Section</span>
<span class="t" style="left:383.25px;top:1098.03px;font-family:'Liberation Sans', sans-serif;font-size:16.5px;font-weight:400;color:#444;letter-spacing:-0.174px;">Page Break</span>
<span class="t" style="left:383.61px;top:1139.53px;font-family:'Liberation Sans', sans-serif;font-size:16.5px;font-weight:400;color:#444;letter-spacing:0.262px;">Collection</span>
<span class="t" style="left:678.58px;top:293.17px;font-family:'Liberation Sans', sans-serif;font-size:25.2px;font-weight:700;color:#444;letter-spacing:-0.085px;">Job Application</span>
<span class="t" style="left:688.27px;top:351.10px;font-family:'Liberation Sans', sans-serif;font-size:17.6px;font-weight:700;color:#444;letter-spacing:-0.031px;">General Information</span>
<span class="t" style="left:875.61px;top:351.10px;font-family:'Liberation Sans', sans-serif;font-size:17.6px;font-weight:400;color:#555;letter-spacing:-0.028px;">Employment History</span>
<span class="t" style="left:1053.61px;top:351.10px;font-family:'Liberation Sans', sans-serif;font-size:17.6px;font-weight:400;color:#555;letter-spacing:-0.015px;">Education History</span>
<span class="t" style="left:1212.59px;top:351.10px;font-family:'Liberation Sans', sans-serif;font-size:17.6px;font-weight:400;color:#555;letter-spacing:-0.037px;">Acknowledgement</span>
<span class="t" style="left:679.67px;top:395.67px;font-family:'Liberation Sans', sans-serif;font-size:25.2px;font-weight:400;color:#555;letter-spacing:-0.017px;">General Information</span>
<span class="t" style="left:679.40px;top:462.10px;font-family:'Liberation Sans', sans-serif;font-size:17.6px;font-weight:700;color:#444;letter-spacing:0.052px;">Desired Position</span>
<span class="t" style="left:821.03px;top:455.88px;font-family:'Liberation Sans', sans-serif;font-size:22px;font-weight:700;color:#b0202a;letter-spacing:0.000px;">*</span>
<span class="t" style="left:679.40px;top:557.10px;font-family:'Liberation Sans', sans-serif;font-size:17.6px;font-weight:700;color:#444;letter-spacing:0.042px;">First Name</span>
<span class="t" style="left:774.03px;top:550.68px;font-family:'Liberation Sans', sans-serif;font-size:22px;font-weight:700;color:#b0202a;letter-spacing:0.000px;">*</span>
<span class="t" style="left:679.40px;top:651.40px;font-family:'Liberation Sans', sans-serif;font-size:17.6px;font-weight:700;color:#444;letter-spacing:0.047px;">Last Name</span>
<span class="t" style="left:771.60px;top:644.58px;font-family:'Liberation Sans', sans-serif;font-size:22px;font-weight:700;color:#b0202a;letter-spacing:0.000px;">*</span>
<span class="t" style="left:679.57px;top:742.10px;font-family:'Liberation Sans', sans-serif;font-size:17.6px;font-weight:700;color:#444;letter-spacing:0.078px;">Address</span>
<span class="t" style="left:679.07px;top:776.12px;font-family:'Liberation Sans', sans-serif;font-size:16.4px;font-weight:400;color:#777;letter-spacing:-0.006px;">Street Address</span>
<span class="t" style="left:679.65px;top:844.12px;font-family:'Liberation Sans', sans-serif;font-size:16.4px;font-weight:400;color:#777;letter-spacing:-0.035px;">Address Line 2</span>
<span class="t" style="left:679.90px;top:913.12px;font-family:'Liberation Sans', sans-serif;font-size:16.4px;font-weight:400;color:#777;letter-spacing:-0.224px;">City</span>
<span class="t" style="left:1132.39px;top:913.12px;font-family:'Liberation Sans', sans-serif;font-size:16.4px;font-weight:400;color:#777;letter-spacing:-0.064px;">State / Province / Region</span>
<span class="t" style="left:678.85px;top:981.12px;font-family:'Liberation Sans', sans-serif;font-size:16.4px;font-weight:400;color:#777;letter-spacing:0.000px;">Postal / Zip Code</span>
<span class="t" style="left:1132.52px;top:981.12px;font-family:'Liberation Sans', sans-serif;font-size:16.4px;font-weight:400;color:#777;letter-spacing:-0.191px;">Country</span>
<span class="t" style="left:678.77px;top:1077.10px;font-family:'Liberation Sans', sans-serif;font-size:17.6px;font-weight:700;color:#444;letter-spacing:0.040px;">Primary Phone</span>
<span class="t" style="left:806.42px;top:1071.38px;font-family:'Liberation Sans', sans-serif;font-size:22px;font-weight:700;color:#b0202a;letter-spacing:0.000px;">*</span>
<span class="t" style="left:111.44px;top:1167.34px;font-family:'Liberation Sans', sans-serif;font-size:18.5px;font-weight:400;color:#333;letter-spacing:-0.036px;z-index:6;">Type here to search</span>
<span class="t" style="left:1786.89px;top:1157.15px;font-family:'Liberation Sans', sans-serif;font-size:14px;font-weight:400;color:#fff;letter-spacing:-0.065px;z-index:6;">1:43 PM</span>
<span class="t" style="left:1774.84px;top:1180.15px;font-family:'Liberation Sans', sans-serif;font-size:14px;font-weight:400;color:#fff;letter-spacing:0.622px;z-index:6;">11/19/2019</span>
</body></html>
